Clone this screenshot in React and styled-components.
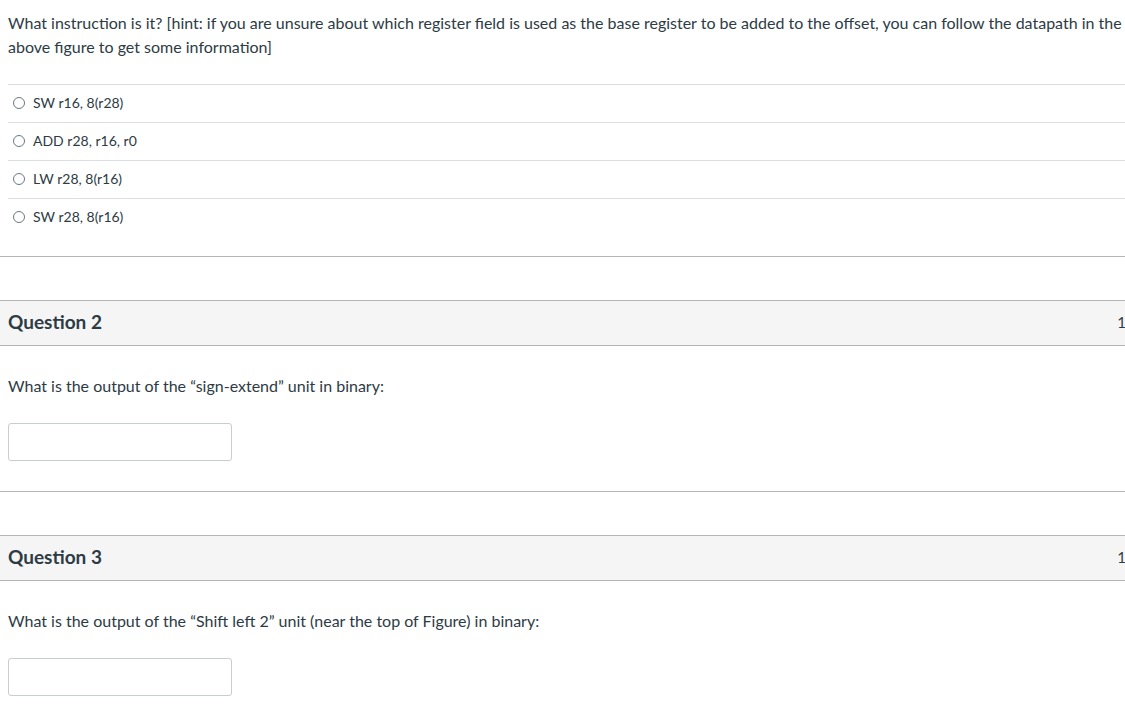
import styled, { createGlobalStyle } from "styled-components";

const GlobalStyle = createGlobalStyle`
  html, body {
    margin: 0;
    padding: 0;
    background: #fff;
    overflow: hidden;
  }
  body {
    font-family: Lato, "Open Sans", sans-serif;
    color: #2d3b45;
  }
`;

const Page = styled.div`
  width: 1158px;
`;

const QuestionBody = styled.div`
  padding: ${(p) => p.$top}px 0 0;
  border-bottom: 1px solid #b5b5b5;
  margin-bottom: 43px;
`;

const Text = styled.div`
  padding: 0 31px 0 8px;
  font-size: 16px;
  line-height: 24px;
`;

const Answers = styled.div`
  margin: 25px 0 20px 8px;
`;

const Answer = styled.label`
  display: flex;
  align-items: center;
  gap: 8px;
  box-sizing: border-box;
  height: 38px;
  padding: 0 0 3px 5px;
  border-top: 1px solid #dcdfe1;
  font-size: 14px;
`;

const Radio = styled.span`
  width: 10px;
  height: 10px;
  margin-top: 2px;
  border: 1px solid #6b7780;
  border-radius: 50%;
  flex-shrink: 0;
`;

const Header = styled.div`
  display: flex;
  align-items: center;
  justify-content: space-between;
  box-sizing: border-box;
  height: 46px;
  padding: 0 8px 3px;
  background: #f5f5f5;
  border-top: 1px solid #b5b5b5;
  border-bottom: 1px solid #b5b5b5;
`;

const Title = styled.h2`
  margin: 0;
  font-size: 19px;
  font-weight: 700;
`;

const Points = styled.span`
  font-size: 15px;
`;

const Input = styled.input`
  display: block;
  box-sizing: border-box;
  width: 224px;
  height: 38px;
  margin: 25px 0 30px 8px;
  border: 1px solid #c7cdd1;
  border-radius: 3px;
  background: #fff;
`;

const answers = ["SW r16, 8(r28)", "ADD r28, r16, r0", "LW r28, 8(r16)", "SW r28, 8(r16)"];

const Question = ({ n, text }) => (
  <>
    <Header>
      <Title>Question {n}</Title>
      <Points>1 pts</Points>
    </Header>
    <QuestionBody $top={28}>
      <Text>{text}</Text>
      <Input type="text" />
    </QuestionBody>
  </>
);

export default function App() {
  return (
    <Page>
      <GlobalStyle />
      <QuestionBody $top={11}>
        <Text>
          What instruction is it? [hint: if you are unsure about which register field is used as the base register to be added to the offset, you can follow the datapath in the above figure to get some information]
        </Text>
        <Answers>
          {answers.map((a) => (
            <Answer key={a}>
              <Radio />
              {a}
            </Answer>
          ))}
        </Answers>
      </QuestionBody>
      <Question n={2} text="What is the output of the “sign-extend” unit in binary:" />
      <Question n={3} text="What is the output of the “Shift left 2” unit (near the top of Figure) in binary:" />
    </Page>
  );
}
